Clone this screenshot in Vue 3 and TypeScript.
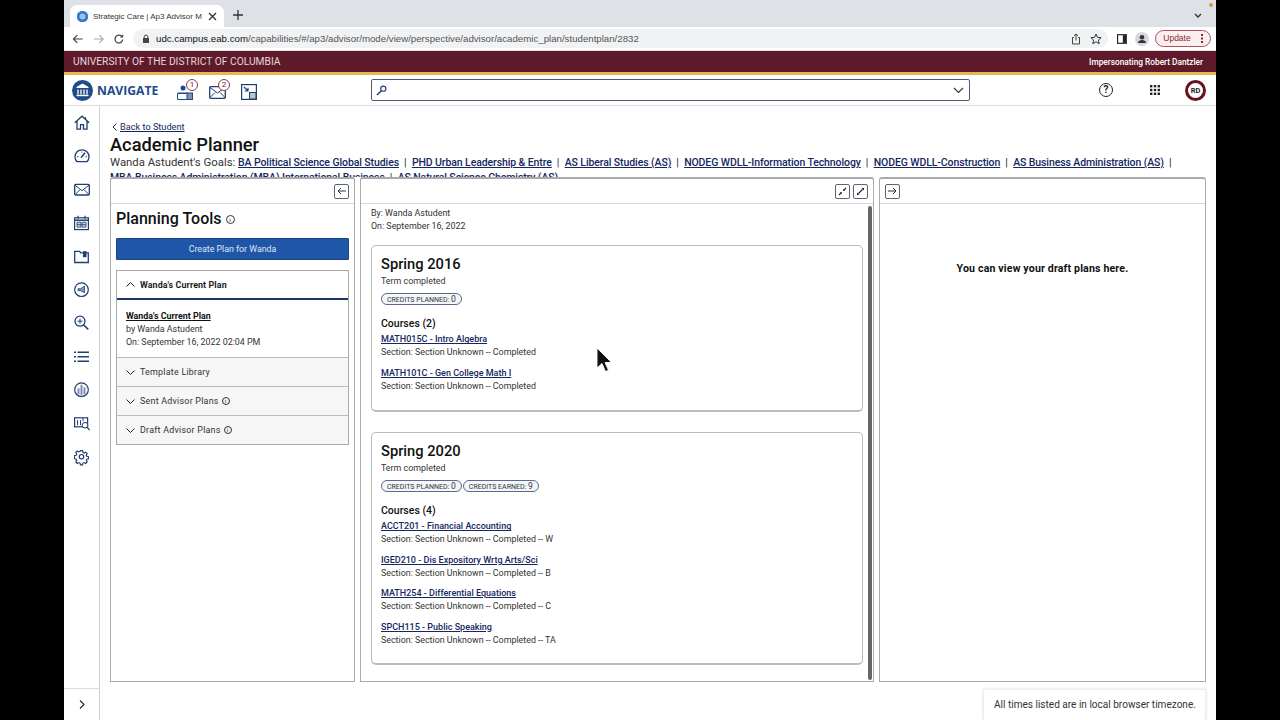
<script setup lang="ts">
interface Term {
  name: string;
  badges: { label: string; value: number }[];
  courses: { title: string; status: string }[];
}

const goals = [
  'BA Political Science Global Studies',
  'PHD Urban Leadership & Entre',
  'AS Liberal Studies (AS)',
  'NODEG WDLL-Information Technology',
  'NODEG WDLL-Construction',
  'AS Business Administration (AS)',
  'MBA Business Administration (MBA) International Business',
  'AS Natural Science Chemistry (AS)'
];

const terms: Term[] = [
  {
    name: 'Spring 2016',
    badges: [{ label: 'CREDITS PLANNED:', value: 0 }],
    courses: [
      { title: 'MATH015C - Intro Algebra', status: 'Section: Section Unknown -- Completed' },
      { title: 'MATH101C - Gen College Math I', status: 'Section: Section Unknown -- Completed' }
    ]
  },
  {
    name: 'Spring 2020',
    badges: [
      { label: 'CREDITS PLANNED:', value: 0 },
      { label: 'CREDITS EARNED:', value: 9 }
    ],
    courses: [
      { title: 'ACCT201 - Financial Accounting', status: 'Section: Section Unknown -- Completed -- W' },
      { title: 'IGED210 - Dis Expository Wrtg Arts/Sci', status: 'Section: Section Unknown -- Completed -- B' },
      { title: 'MATH254 - Differential Equations', status: 'Section: Section Unknown -- Completed -- C' },
      { title: 'SPCH115 - Public Speaking', status: 'Section: Section Unknown -- Completed -- TA' }
    ]
  }
];
</script>

<template>
  <div class="screen">
    <div class="window">
      <!-- browser chrome -->
      <div class="tabstrip">
        <div class="tab">
          <span class="favicon"></span>
          <span class="tab-title">Strategic Care | Ap3 Advisor M</span>
          <svg class="tab-x" width="9" height="9" viewBox="0 0 9 9"><path d="M1 1l7 7M8 1L1 8" stroke="#333" stroke-width="1.3" /></svg>
        </div>
        <svg class="tab-plus" width="10" height="10" viewBox="0 0 10 10"><path d="M5 0v10M0 5h10" stroke="#333" stroke-width="1.3" /></svg>
        <span class="spacer"></span>
        <svg class="tab-down" width="8" height="6" viewBox="0 0 8 6"><path d="M1 1l3 3 3-3" fill="none" stroke="#333" stroke-width="1.4" /></svg>
        <span class="rec-dot"></span>
      </div>
      <div class="toolbar">
        <svg width="12" height="12" viewBox="0 0 12 12"><path d="M11 6H1.5M5.500 2L1.5 6l4 4" fill="none" stroke="#444" stroke-width="1.2" /></svg>
        <svg class="fwd" width="12" height="12" viewBox="0 0 12 12"><path d="M1 6h9.500M6.500 2l4 4-4 4" fill="none" stroke="#aaa" stroke-width="1.2" /></svg>
        <svg class="reload" width="12" height="12" viewBox="0 0 12 12"><path d="M10 6.500A4 4 0 1 1 8.800 3.200" fill="none" stroke="#444" stroke-width="1.300" /><path d="M10.500 1v3.500H7z" fill="#444" /></svg>
        <div class="urlbar">
          <svg width="8" height="10" viewBox="0 0 8 10"><rect x="1" y="4" width="6" height="5" fill="#444" /><path d="M2.200 4V2.800a1.800 1.800 0 0 1 3.600 0V4" fill="none" stroke="#444" /></svg>
          <span class="url"><b>udc.campus.eab.com</b>/capabilities/#/ap3/advisor/mode/view/perspective/advisor/academic_plan/studentplan/2832</span>
          <span class="spacer"></span>
          <svg width="10" height="12" viewBox="0 0 10 12"><path d="M3 4.500H1.500v6.500h7V4.500H7M5 7.500V1M3 2.800L5 1l2 1.800" fill="none" stroke="#444" /></svg>
          <svg class="star" width="12" height="12" viewBox="0 0 12 12"><path d="M6 1l1.500 3.400 3.600.3-2.700 2.400.8 3.600L6 8.800l-3.200 1.900.8-3.600L.9 4.700l3.600-.3z" fill="none" stroke="#333" /></svg>
        </div>
        <svg class="side" width="11" height="10" viewBox="0 0 11 10"><rect x=".6" y=".6" width="9.800" height="8.800" fill="none" stroke="#222" stroke-width="1.200" /><rect x="6" y="1" width="4" height="8" fill="#222" /></svg>
        <span class="profile">
          <svg width="14" height="14" viewBox="0 0 14 14"><circle cx="7" cy="7" r="7" fill="#d5d8de" /><circle cx="7" cy="5.200" r="2.300" fill="#333" /><path d="M2.800 11c.6-2.200 2.200-3 4.200-3s3.600.8 4.200 3z" fill="#333" /></svg>
        </span>
        <span class="update">Update<i class="dots"></i></span>
      </div>

      <!-- campus banner -->
      <div class="banner">
        <span>UNIVERSITY OF THE DISTRICT OF COLUMBIA</span>
        <span class="imp">Impersonating Robert Dantzler</span>
      </div>

      <!-- app nav -->
      <div class="nav">
        <div class="brand">
          <svg width="21" height="21" viewBox="0 0 21 21">
            <circle cx="10.500" cy="10.500" r="10.500" fill="#1f4a8c" />
            <path d="M10.500 3.500L4.500 7v1h12V7z" fill="#fff" />
            <path d="M6 9.500v5M9 9.500v5M12 9.500v5M15 9.500v5" stroke="#fff" stroke-width="1.300" />
            <path d="M4.500 15.500h12" stroke="#fff" stroke-width="1.400" />
          </svg>
          <span class="brand-name">NAVIGATE</span>
        </div>
        <div class="nav-icon first">
          <svg width="16" height="15" viewBox="0 0 16 15"><circle cx="6" cy="3" r="2.500" fill="#1f4a8c" /><path d="M.5 14.500V8.500h10v6z" fill="#fff" stroke="#1f4a8c" /><rect x="10" y="8" width="5.500" height="6.500" fill="#7d8fb0" stroke="#1f4a8c" /><path d="M.5 9h10V7.500H.5z" fill="#1f4a8c" /></svg>
          <span class="bubble">1</span>
        </div>
        <div class="nav-icon">
          <svg width="17" height="13" viewBox="0 0 17 13"><rect x=".7" y=".7" width="15.600" height="11.600" rx="1" fill="#fff" stroke="#1f3f70" stroke-width="1.300" /><path d="M1 1.500l7.500 5.500L16 1.500M1 11.500l5-5M16 11.500l-5-5" fill="none" stroke="#1f3f70" /></svg>
          <span class="bubble">2</span>
        </div>
        <div class="nav-icon">
          <svg width="16" height="16" viewBox="0 0 16 16"><rect x=".6" y=".6" width="14.800" height="14.800" fill="#fff" stroke="#1f3f70" stroke-width="1.200" /><rect x="8.500" y="8.500" width="6.500" height="6.500" fill="#b8c2d2" stroke="#1f3f70" /><path d="M3 3l4 4M7 3.800V7H3.800" fill="none" stroke="#1f3f70" stroke-width="1.200" /></svg>
        </div>
        <div class="search">
          <svg width="11" height="11" viewBox="0 0 11 11"><circle cx="7.300" cy="3.700" r="2.600" fill="none" stroke="#1f3f70" stroke-width="1.100" /><path d="M5.300 5.700L1 10" stroke="#1f3f70" stroke-width="1.500" /></svg>
          <span class="spacer"></span>
          <svg width="11" height="7" viewBox="0 0 11 7"><path d="M1 1l4.500 4.500L10 1" fill="none" stroke="#333" stroke-width="1.100" /></svg>
        </div>
        <div class="nav-right">
          <span class="help">?</span>
          <svg class="apps" width="10" height="10" viewBox="0 0 10 10" fill="#222">
            <rect width="2.400" height="2.400" /><rect x="3.800" width="2.400" height="2.400" /><rect x="7.600" width="2.400" height="2.400" />
            <rect y="3.800" width="2.400" height="2.400" /><rect x="3.800" y="3.800" width="2.400" height="2.400" /><rect x="7.600" y="3.800" width="2.400" height="2.400" />
            <rect y="7.600" width="2.400" height="2.400" /><rect x="3.800" y="7.600" width="2.400" height="2.400" /><rect x="7.600" y="7.600" width="2.400" height="2.400" />
          </svg>
          <span class="avatar">RD</span>
        </div>
      </div>

      <div class="body">
        <!-- left rail -->
        <aside class="rail">
          <div class="rail-icons">
            <svg width="16" height="15" viewBox="0 0 16 15"><path d="M.8 7.500L8 1l7.200 6.500M3 6v8h3.500V9.500h3V14H13V6M11.500 2v2.500" fill="none" stroke="#1f3f70" stroke-width="1.300" /></svg>
            <svg width="16" height="14" viewBox="0 0 16 14"><path d="M3 13A7 7 0 1 1 13 13z" fill="#fff" stroke="#1f3f70" stroke-width="1.300" /><path d="M7 9l4-5" stroke="#1f3f70" stroke-width="1.500" /><path d="M3 8h1.500M11.500 8H13M8 3v1" stroke="#1f3f70" /></svg>
            <svg width="16" height="12" viewBox="0 0 16 12"><rect x=".7" y=".7" width="14.600" height="10.600" rx="1" fill="#fff" stroke="#1f3f70" stroke-width="1.300" /><path d="M1 1.500L8 7l7-5.500M1 11l5-5M15 11l-5-5" fill="none" stroke="#1f3f70" /></svg>
            <svg width="15" height="15" viewBox="0 0 15 15"><rect x=".6" y="2.600" width="13.800" height="11.800" fill="#fff" stroke="#1f3f70" stroke-width="1.200" /><path d="M.6 5h13.800" stroke="#1f3f70" stroke-width="1.500" /><path d="M4 .5v3M11 .5v3" stroke="#1f3f70" stroke-width="1.200" /><path d="M3 7h4v5H3zM8 7h4v5H8zM3 9.500h9" fill="#c7d0df" stroke="#1f3f70" stroke-width=".8" /></svg>
            <svg width="15" height="13" viewBox="0 0 15 13"><path d="M.7 12.300V1.200h5l1 1.500h7.600v9.600z" fill="#fff" stroke="#1f3f70" stroke-width="1.300" /><rect x="9" y="1" width="3.500" height="6" fill="#1f3f70" /></svg>
            <svg width="15" height="15" viewBox="0 0 15 15"><circle cx="7.500" cy="7.500" r="6.800" fill="none" stroke="#1f3f70" stroke-width="1.200" /><path d="M4 6.500h2.500L10.500 4v6.500L6.500 8.500H4z" fill="#8795ad" stroke="#1f3f70" stroke-width=".8" /></svg>
            <svg width="15" height="15" viewBox="0 0 15 15"><circle cx="6" cy="6" r="5" fill="none" stroke="#1f3f70" stroke-width="1.300" /><path d="M9.800 9.800l4.500 4.500" stroke="#1f3f70" stroke-width="1.700" /><path d="M6 3.500v5M3.500 6h5" stroke="#1f3f70" /></svg>
            <svg width="15" height="12" viewBox="0 0 15 12"><path d="M0 1.500h2M3.500 1.500H15M0 6h2M3.500 6H15M0 10.500h2M3.500 10.500H15" stroke="#1f3f70" stroke-width="1.600" /></svg>
            <svg width="15" height="15" viewBox="0 0 15 15"><circle cx="7.500" cy="7.500" r="6.800" fill="#fff" stroke="#1f3f70" stroke-width="1.200" /><path d="M3.500 12V6h2v6zM6.500 13V2.500h2V13zM9.500 12V5h2v7z" fill="#7d8fb0" /></svg>
            <svg width="16" height="15" viewBox="0 0 16 15"><rect x=".6" y="1.600" width="13" height="9" fill="#fff" stroke="#1f3f70" stroke-width="1.200" /><path d="M3.500 4v5M6.500 4v5M9 2v3" stroke="#1f3f70" /><circle cx="11" cy="9" r="2.800" fill="#fff" stroke="#1f3f70" /><path d="M13 11l2.500 3" stroke="#1f3f70" stroke-width="1.300" /></svg>
            <svg width="15" height="15" viewBox="0 0 15 15"><circle cx="7.500" cy="7.500" r="2.200" fill="none" stroke="#1f3f70" stroke-width="1.200" /><path d="M6.300.8h2.400l.4 2 1.300.6 1.800-1 1.600 1.600-1 1.800.6 1.300 2 .4v2.400l-2 .4-.6 1.300 1 1.800-1.600 1.600-1.800-1-1.300.6-.4 2H6.300l-.4-2-1.300-.6-1.800 1-1.600-1.600 1-1.800-.6-1.300-2-.4V6.300l2-.4.6-1.300-1-1.800 1.600-1.600 1.800 1 1.300-.6z" transform="translate(.75 .75) scale(.9)" fill="none" stroke="#1f3f70" stroke-width="1.300" /></svg>
          </div>
          <div class="rail-toggle">
            <svg width="6" height="9" viewBox="0 0 6 9"><path d="M1 .5l4 4-4 4" fill="none" stroke="#1f2a44" stroke-width="1.100" /></svg>
          </div>
        </aside>

        <main class="main">
          <a class="back">
            <svg width="5" height="8" viewBox="0 0 5 8"><path d="M4.500.5L1 4l3.500 3.500" fill="none" stroke="#1f2a44" /></svg>
            <span>Back to Student</span>
          </a>
          <h1 class="title">Academic Planner</h1>
          <div class="goals">
            Wanda Astudent's Goals:
            <template v-for="(g, i) in goals" :key="g">
              <a>{{ g }}</a><span v-if="i < goals.length - 1" class="sep">|</span>{{ ' ' }}
            </template>
          </div>

          <div class="panels">
            <!-- planning tools -->
            <section class="panel left">
              <div class="panel-head end">
                <button class="sq"><svg width="9" height="8" viewBox="0 0 9 8"><path d="M9 4H1M4 1L1 4l3 3" fill="none" stroke="#333" /></svg></button>
              </div>
              <div class="tools">
                <h2 class="tools-title">Planning Tools<i class="info big">i</i></h2>
                <button class="create">Create Plan for Wanda</button>
                <div class="accordion">
                  <div class="acc-row open">
                    <svg width="9" height="5" viewBox="0 0 9 5"><path d="M.5 4.500l4-4 4 4" fill="none" stroke="#222" /></svg>
                    <b>Wanda's Current Plan</b>
                  </div>
                  <div class="acc-body">
                    <a class="plan-link">Wanda's Current Plan</a>
                    <div>by Wanda Astudent</div>
                    <div>On: September 16, 2022 02:04 PM</div>
                  </div>
                  <div class="acc-row closed">
                    <svg width="9" height="5" viewBox="0 0 9 5"><path d="M.5.500l4 4 4-4" fill="none" stroke="#222" /></svg>
                    <span>Template Library</span>
                  </div>
                  <div class="acc-row closed">
                    <svg width="9" height="5" viewBox="0 0 9 5"><path d="M.5.500l4 4 4-4" fill="none" stroke="#222" /></svg>
                    <span>Sent Advisor Plans</span><i class="info">i</i>
                  </div>
                  <div class="acc-row closed">
                    <svg width="9" height="5" viewBox="0 0 9 5"><path d="M.5.500l4 4 4-4" fill="none" stroke="#222" /></svg>
                    <span>Draft Advisor Plans</span><i class="info">i</i>
                  </div>
                </div>
              </div>
            </section>

            <!-- current plan -->
            <section class="panel middle">
              <div class="panel-head end">
                <button class="sq"><svg width="9" height="9" viewBox="0 0 9 9"><path d="M1 8l2.500-2.500M8 1L5.500 3.500" stroke="#222" stroke-width="1.100" /><path d="M5.200 2v1.800H7zM3.800 7V5.200H2z" fill="#222" /></svg></button>
                <button class="sq"><svg width="9" height="9" viewBox="0 0 9 9"><path d="M2.500 6.500l4-4" stroke="#222" stroke-width="1.100" /><path d="M5.500 1H8v2.500zM1 5.500V8h2.500z" fill="#222" /></svg></button>
              </div>
              <div class="plan-scroll">
                <div class="plan-content">
                  <div class="meta">By: Wanda Astudent</div>
                  <div class="meta">On: September 16, 2022</div>
                  <article v-for="t in terms" :key="t.name" class="term">
                    <h3>{{ t.name }}</h3>
                    <div class="line">Term completed</div>
                    <div class="badges">
                      <span v-for="b in t.badges" :key="b.label" class="badge">{{ b.label }} <em>{{ b.value }}</em></span>
                    </div>
                    <h4>Courses ({{ t.courses.length }})</h4>
                    <div v-for="c in t.courses" :key="c.title" class="course">
                      <a>{{ c.title }}</a>
                      <div class="line">{{ c.status }}</div>
                    </div>
                  </article>
                </div>
                <div class="scrollbar"></div>
              </div>
            </section>

            <!-- drafts -->
            <section class="panel right">
              <div class="panel-head">
                <button class="sq"><svg width="9" height="8" viewBox="0 0 9 8"><path d="M0 4h8M5 1l3 3-3 3" fill="none" stroke="#333" /></svg></button>
              </div>
              <p class="draft-note">You can view your draft plans here.</p>
            </section>
          </div>

          <div class="foot">
            <div class="toast">All times listed are in local browser timezone.</div>
          </div>
        </main>
      </div>

      <!-- mouse pointer captured in the recording -->
      <svg class="pointer" width="16" height="26" viewBox="0 0 16 26"><path d="M1 1v20l5-4.500 3.500 8 3-1.300-3.500-7.700h6.500z" fill="#111" stroke="#fff" stroke-width=".9" /></svg>
    </div>
  </div>
</template>

<style>
html, body { margin: 0; background: #000; }
</style>

<style scoped>
.screen {
  width: 1280px;
  height: 720px;
  background: #000;
  display: flex;
  justify-content: center;
  overflow: hidden;
  font-family: Roboto, "Liberation Sans", sans-serif;
  color: #1c1c1c;
}

.window {
  position: relative;
  width: 1152px;
  height: 720px;
  background: #fff;
  display: flex;
  flex-direction: column;
}

.spacer { flex: 1; }

.tabstrip {
  height: 27px;
  background: #dee1e6;
  display: flex;
  align-items: flex-end;
  padding-left: 6px;
  position: relative;
}

.tab {
  width: 154px;
  height: 22px;
  box-sizing: border-box;
  background: #fff;
  border-radius: 7px 7px 0 0;
  display: flex;
  align-items: center;
  padding: 0 7px;
  font-family: "Liberation Sans", sans-serif;
  font-size: 8px;
  color: #333;
}

.favicon {
  width: 11px;
  height: 11px;
  border-radius: 50%;
  background: #1f5fb4;
  box-shadow: inset 0 0 0 2.500px #2f78d0, inset 0 0 0 6px #9cc0ea;
  flex: none;
}

.tab-title {
  margin-left: 5px;
  flex: 1;
  white-space: nowrap;
  overflow: hidden;
}

.tab-x { flex: none; }
.tab-plus { margin: 0 0 7px 9px; }
.tab-down { margin: 0 14px 8px 0; }

.rec-dot {
  position: absolute;
  top: 3px;
  right: 3px;
  width: 4px;
  height: 4px;
  border-radius: 50%;
  background: #e0934a;
}

.toolbar {
  height: 24px;
  box-sizing: border-box;
  background: #fff;
  display: flex;
  align-items: center;
  padding: 0 5px 0 8px;
  border-bottom: 1px solid #e4e4e4;
}

.fwd { margin-left: 9px; }
.reload { margin-left: 9px; }

.urlbar {
  width: 1001px;
  height: 19px;
  box-sizing: border-box;
  margin-left: 8px;
  background: #f0f2f4;
  border-radius: 10px;
  display: flex;
  align-items: center;
  padding: 0 6px 0 9px;
}

.url {
  margin-left: 6px;
  font-family: "Liberation Sans", sans-serif;
  font-size: 9.680px;
  color: #555;
  white-space: nowrap;
}

.url b { font-weight: 400; color: #111; }
.star { margin-left: 9px; }
.side { margin-left: 9px; }

.profile {
  margin-left: 8px;
  display: flex;
}

.update {
  margin-left: 6px;
  width: 57px;
  height: 17px;
  box-sizing: border-box;
  border: 1px solid #a8525c;
  border-radius: 9px;
  background: #fbeeef;
  color: #8a2a36;
  font-family: "Liberation Sans", sans-serif;
  font-size: 8.500px;
  line-height: 15px;
  padding-left: 7px;
  position: relative;
}

.dots {
  position: absolute;
  right: 7px;
  top: 3px;
  width: 2px;
  height: 2px;
  background: #8a2a36;
  box-shadow: 0 3.500px 0 #8a2a36, 0 7px 0 #8a2a36;
}

.banner {
  height: 21px;
  background: #5e1a2a;
  border-bottom: 3px solid #e7b552;
  box-shadow: inset 0 -1px 0 #5e1a2a;
  display: flex;
  align-items: center;
  justify-content: space-between;
  padding: 0 13px 0 9px;
  font-size: 10.250px;
  color: #e5d6d8;
}

.imp {
  font-size: 8.300px;
  font-weight: 500;
  color: #fff;
}

.nav {
  height: 30px;
  border-bottom: 1px solid #dcdcdc;
  display: flex;
  align-items: center;
  padding-left: 8px;
  flex: none;
}

.brand {
  display: flex;
  align-items: center;
  width: 97px;
}

.brand-name {
  margin-left: 4px;
  font-family: "Open Sans", Roboto, sans-serif;
  font-weight: 700;
  font-size: 12.200px;
  color: #1f4a8c;
}

.nav-icon {
  position: relative;
  width: 32px;
  display: flex;
  align-items: center;
  height: 30px;
  padding-top: 4px;
  box-sizing: border-box;
}

.nav-icon.first { margin-left: 8px; }

.bubble {
  position: absolute;
  left: 9px;
  top: 4px;
  width: 12px;
  height: 12px;
  box-sizing: border-box;
  border: 1px solid #8a3a44;
  border-radius: 50%;
  background: #fff;
  font-size: 8px;
  line-height: 10px;
  text-align: center;
  color: #5e1a2a;
}

.search {
  width: 599px;
  height: 22px;
  box-sizing: border-box;
  margin-left: 98px;
  border: 1px solid #4c5a75;
  border-radius: 2px;
  display: flex;
  align-items: center;
  padding: 0 5px 0 4px;
}

.nav-right {
  flex: 1;
  display: flex;
  align-items: center;
  padding-left: 129px;
}

.help {
  width: 14px;
  height: 14px;
  box-sizing: border-box;
  border: 1.500px solid #222;
  border-radius: 50%;
  font-size: 10px;
  font-weight: 700;
  line-height: 11px;
  text-align: center;
}

.apps { margin-left: 37px; }

.avatar {
  margin-left: 25px;
  width: 21px;
  height: 21px;
  box-sizing: border-box;
  border: 3px solid #6a1020;
  border-radius: 50%;
  font-size: 7.500px;
  font-weight: 700;
  line-height: 15px;
  text-align: center;
}

.body {
  flex: 1;
  min-height: 0;
  display: flex;
}

.rail {
  width: 36px;
  flex: none;
  box-sizing: border-box;
  border-right: 1px solid #d0d0d0;
  display: flex;
  flex-direction: column;
}

.rail-icons {
  flex: 1;
  display: flex;
  flex-direction: column;
  align-items: center;
}

.rail-icons svg { height: 33.400px; flex: none; }

.rail-toggle {
  height: 31px;
  border-top: 1px solid #dcdcdc;
  display: flex;
  align-items: center;
  justify-content: center;
}

.main {
  flex: 1;
  min-width: 0;
  padding: 15px 10px 0;
  display: flex;
  flex-direction: column;
}

a {
  color: #14275e;
  text-decoration: underline;
}

.back {
  display: flex;
  align-items: center;
  gap: 3px;
  padding-left: 2px;
  height: 11px;
  font-size: 9.200px;
}

.title {
  margin: 2px 0 0;
  font-size: 18.300px;
  font-weight: 500;
  line-height: 21px;
  color: #111;
}

.goals {
  height: 22px;
  overflow: hidden;
  font-size: 11.350px;
  line-height: 15px;
  color: #333;
  flex: none;
}

.goals a {
  font-size: 10.500px;
  font-weight: 500;
  letter-spacing: -0.1px;
  white-space: nowrap;
}

.sep { margin: 0 2.500px 0 5px; color: #222; font-size: 10.500px; }

.panels {
  height: 505px;
  flex: none;
  display: flex;
  gap: 5px;
  position: relative;
}

.panel {
  box-sizing: border-box;
  border: 1px solid #aaa;
  border-top-width: 2px;
  border-radius: 3px 3px 0 0;
  background: #fff;
  display: flex;
  flex-direction: column;
  min-height: 0;
}

.left { width: 245px; }
.middle { width: 514px; }
.right { width: 327px; }

.panel-head {
  height: 25px;
  flex: none;
  box-sizing: border-box;
  border-bottom: 1px solid #d8d8d8;
  display: flex;
  align-items: center;
  gap: 3px;
  padding: 0 5px;
}

.panel-head.end { justify-content: flex-end; }

.sq {
  width: 15px;
  height: 15px;
  padding: 0;
  background: #fff;
  border: 1px solid #5b6478;
  border-radius: 2px;
  display: flex;
  align-items: center;
  justify-content: center;
}

.tools { padding: 0 5px; }

.tools-title {
  margin: 5px 0 0;
  font-size: 16px;
  font-weight: 500;
  line-height: 20px;
  color: #111;
  display: flex;
  align-items: center;
}

.info {
  width: 8px;
  height: 8px;
  box-sizing: border-box;
  border: 1px solid #333;
  border-radius: 50%;
  font-size: 6px;
  font-style: normal;
  font-weight: 400;
  line-height: 6px;
  text-align: center;
  margin-left: 4px;
}

.info.big { margin-left: 4px; width: 9px; height: 9px; line-height: 7px; }

.create {
  display: block;
  width: 233px;
  height: 22px;
  margin-top: 9px;
  padding: 0;
  background: #1f56a8;
  border: 1px solid #174485;
  border-radius: 1px;
  color: #dfe7f3;
  font-family: inherit;
  font-size: 8.800px;
}

.accordion {
  width: 233px;
  box-sizing: border-box;
  margin-top: 10px;
  border: 1px solid #aaa;
  font-size: 8.900px;
}

.acc-row {
  display: flex;
  align-items: center;
  padding-left: 9px;
  gap: 5px;
}

.acc-row b { font-weight: 700; letter-spacing: .1px; }

.acc-row.open {
  height: 27px;
  border-bottom: 2px solid #1b3566;
}

.acc-row.closed {
  height: 28px;
  border-top: 1px solid #bbb;
  background: #f6f6f6;
  color: #333;
  letter-spacing: .25px;
}

.acc-row.closed .info { margin-left: -2px; }

.acc-body {
  padding: 10px 9px 7px;
  line-height: 13px;
  height: 40px;
  color: #333;
}

.plan-link {
  display: block;
  font-weight: 700;
  color: #111;
}

.plan-scroll {
  flex: 1;
  min-height: 0;
  display: flex;
}

.plan-content {
  flex: 1;
  min-width: 0;
  padding: 2.500px 0 0 10px;
}

.scrollbar {
  width: 4px;
  flex: none;
  margin: 2px 1px 1px 3px;
  background: #666;
  border-radius: 2px;
}

.meta {
  font-size: 8.900px;
  line-height: 13px;
  color: #333;
}

.term {
  width: 492px;
  box-sizing: border-box;
  margin-top: 12.500px;
  padding: 9px 9px 0;
  border: 1px solid #bbb;
  border-bottom-width: 2px;
  border-radius: 5px;
}

.term + .term { margin-top: 20px; }
.term:first-of-type { height: 167px; }
.term:last-of-type { height: 233px; }

.term h3 {
  margin: 0;
  font-size: 14.700px;
  font-weight: 500;
  line-height: 18px;
  color: #111;
}

.line {
  font-size: 8.900px;
  line-height: 13px;
  color: #333;
}

.term h3 + .line { margin-top: 2px; }

.badges {
  margin-top: 5px;
  display: flex;
  gap: 1px;
}

.badge {
  height: 12px;
  box-sizing: border-box;
  padding: 0 5px;
  border: 1px solid #5a6a88;
  border-radius: 6px;
  background: #f3f6fa;
  font-size: 7px;
  line-height: 10px;
  color: #333;
  white-space: nowrap;
}

.badge em {
  font-style: normal;
  font-size: 8.500px;
}

.term h4 {
  margin: 12px 0 0;
  font-size: 10.500px;
  font-weight: 500;
  line-height: 13px;
  color: #111;
}

.course { margin-top: 3.400px; margin-bottom: 7.400px; }

.course a {
  display: block;
  font-size: 9px;
  font-weight: 500;
  line-height: 13px;
}

.draft-note {
  margin: 58px 0 0;
  text-align: center;
  font-size: 10.600px;
  font-weight: 700;
  color: #111;
  letter-spacing: .15px;
}

.foot {
  flex: 1;
  display: flex;
  justify-content: flex-end;
  align-items: flex-end;
}

.toast {
  width: 223px;
  height: 31px;
  box-sizing: border-box;
  padding-left: 10px;
  line-height: 30px;
  font-size: 10.050px;
  color: #333;
  white-space: nowrap;
  border: 1px solid #eee;
  border-bottom: 0;
  box-shadow: 0 0 3px rgba(0, 0, 0, 0.12);
  background: #fff;
}

.pointer {
  position: absolute;
  left: 532px;
  top: 347px;
}
</style>
